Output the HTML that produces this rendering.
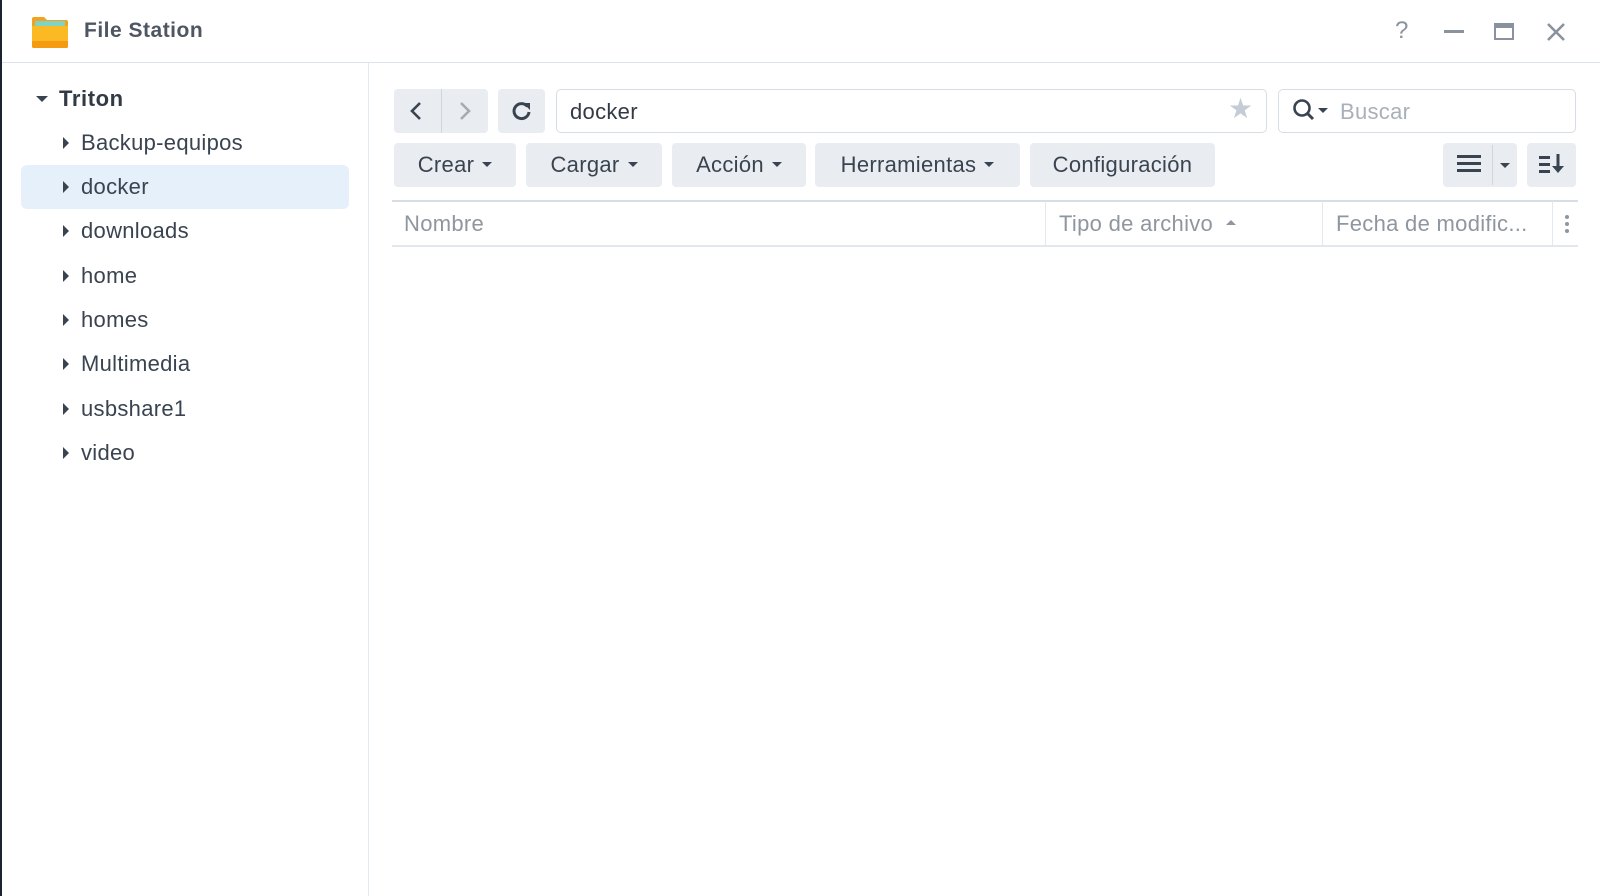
<!DOCTYPE html>
<html><head><meta charset="utf-8"><style>
*{box-sizing:border-box;margin:0;padding:0}
body{width:1600px;height:896px;background:#fff;font-family:"Liberation Sans",sans-serif;position:relative;overflow:hidden;color:#3a4450}
.win{position:absolute;left:2px;top:0;width:1598px;height:896px;background:#fff;border-radius:6px 0 0 0}
.a{position:absolute}
.t{position:absolute;font-size:22px;line-height:24px;white-space:nowrap;letter-spacing:0.3px}
.btn{position:absolute;background:#e9edf2;border-radius:4px;font-size:22px;letter-spacing:0.3px;color:#3a4450;text-align:center;line-height:44px;height:44px}
.car{display:inline-block;width:0;height:0;border-left:5px solid transparent;border-right:5px solid transparent;border-top:5px solid #3a4450;vertical-align:middle;margin-left:8px;margin-top:-3px}
.tri{position:absolute;width:0;height:0;border-top:6px solid transparent;border-bottom:6px solid transparent;border-left:6px solid #3a4450}
</style></head><body>
<div class="a" style="left:0;top:0;width:2px;height:896px;background:#1e2130"></div>
<div class="win">
 <svg class="a" style="left:28px;top:15px" width="40" height="34" viewBox="0 0 40 34">
  <path d="M2 4 Q2 2 4 2 H14 L17 5 H36 Q38 5 38 7 V31 Q38 33 36 33 H4 Q2 33 2 31Z" fill="#f2a21c"/>
  <rect x="5" y="6" width="30" height="6" fill="#7fd3c4"/>
  <path d="M2 11 H38 V31 Q38 33 36 33 H4 Q2 33 2 31Z" fill="#fbb924"/>
  <path d="M2 26 H38 V31 Q38 33 36 33 H4 Q2 33 2 31Z" fill="#f59b12"/>
 </svg>
 <div class="t" style="left:82px;top:19px;font-weight:bold;color:#4e5661;font-size:21px;letter-spacing:0.5px">File Station</div>
 <div class="t" style="left:1393px;top:19px;font-size:24px;color:#8a939d">?</div>
 <div class="a" style="left:1442px;top:30px;width:20px;height:3px;background:#8a939d"></div>
 <div class="a" style="left:1492px;top:23px;width:20px;height:17px;border:2.5px solid #8a939d;border-top-width:5px"></div>
 <svg class="a" style="left:1544px;top:22px" width="20" height="20"><path d="M2 2L18 18M18 2L2 18" stroke="#8a939d" stroke-width="2.6"/></svg>
 <div class="a" style="left:0;top:62px;width:1598px;height:1px;background:#dde3ea"></div>
 <div class="a" style="left:366px;top:63px;width:1px;height:833px;background:#e3e8ee"></div>
 <div class="a" style="left:34px;top:96px;width:0;height:0;border-left:6px solid transparent;border-right:6px solid transparent;border-top:6px solid #3a4450"></div>
 <div class="t" style="left:57px;top:87px;font-weight:bold;font-size:22px;color:#323b45;letter-spacing:0.6px">Triton</div>
 <div class="a" style="left:19px;top:165px;width:328px;height:44px;background:#e6f0fb;border-radius:6px"></div>
 <div class="tri" style="left:61px;top:137px"></div><div class="t" style="left:79px;top:131px">Backup-equipos</div>
 <div class="tri" style="left:61px;top:181px"></div><div class="t" style="left:79px;top:175px">docker</div>
 <div class="tri" style="left:61px;top:225px"></div><div class="t" style="left:79px;top:219px">downloads</div>
 <div class="tri" style="left:61px;top:270px"></div><div class="t" style="left:79px;top:264px">home</div>
 <div class="tri" style="left:61px;top:314px"></div><div class="t" style="left:79px;top:308px">homes</div>
 <div class="tri" style="left:61px;top:358px"></div><div class="t" style="left:79px;top:352px">Multimedia</div>
 <div class="tri" style="left:61px;top:403px"></div><div class="t" style="left:79px;top:397px">usbshare1</div>
 <div class="tri" style="left:61px;top:447px"></div><div class="t" style="left:79px;top:441px">video</div>
 <div class="btn" style="left:392px;top:89px;width:94px"></div>
 <div class="a" style="left:439px;top:89px;width:1px;height:44px;background:#cfd6de"></div>
 <svg class="a" style="left:405px;top:100px" width="20" height="22"><path d="M13 3L5 11L13 19" fill="none" stroke="#3a4450" stroke-width="2.6"/></svg>
 <svg class="a" style="left:452px;top:100px" width="20" height="22"><path d="M7 3L15 11L7 19" fill="none" stroke="#a3abb4" stroke-width="2.6"/></svg>
 <div class="btn" style="left:496px;top:89px;width:47px"></div>
 <svg class="a" style="left:508px;top:100px" width="24" height="22"><path d="M17.5 6.5A7.5 7.5 0 1 0 19 12" fill="none" stroke="#3a4450" stroke-width="3"/><path d="M13 3H20V10Z" fill="#3a4450"/></svg>
 <div class="a" style="left:554px;top:89px;width:711px;height:44px;border:1.5px solid #d6dde5;border-radius:5px"></div>
 <div class="t" style="left:568px;top:100px;color:#323b45">docker</div>
 <div class="t" style="left:1226px;top:97px;font-size:28px;color:#c5ccd5">★</div>
 <div class="a" style="left:1276px;top:89px;width:298px;height:44px;border:1.5px solid #d6dde5;border-radius:5px"></div>
 <svg class="a" style="left:1290px;top:98px" width="26" height="26"><circle cx="10" cy="10" r="7.5" fill="none" stroke="#3a4450" stroke-width="2.6"/><path d="M15.5 15.5L21 21" stroke="#3a4450" stroke-width="3"/></svg>
 <div class="a" style="left:1316px;top:108px;border-left:5px solid transparent;border-right:5px solid transparent;border-top:5px solid #3a4450"></div>
 <div class="t" style="left:1338px;top:100px;color:#a8b0b9">Buscar</div>
 <div class="btn" style="left:392px;top:143px;width:122px">Crear<span class="car"></span></div>
 <div class="btn" style="left:524px;top:143px;width:136px">Cargar<span class="car"></span></div>
 <div class="btn" style="left:670px;top:143px;width:134px">Acción<span class="car"></span></div>
 <div class="btn" style="left:813px;top:143px;width:205px">Herramientas<span class="car"></span></div>
 <div class="btn" style="left:1028px;top:143px;width:185px">Configuración</div>
 <div class="btn" style="left:1441px;top:143px;width:74px"></div>
 <div class="a" style="left:1490px;top:145px;width:1px;height:40px;background:#cfd6de"></div>
 <div class="a" style="left:1455px;top:155px;width:24px;height:3px;background:#3a4450;box-shadow:0 7px 0 #3a4450,0 14px 0 #3a4450"></div>
 <div class="a" style="left:1498px;top:163px;border-left:5px solid transparent;border-right:5px solid transparent;border-top:5px solid #3a4450"></div>
 <div class="btn" style="left:1525px;top:143px;width:49px"></div>
 <div class="a" style="left:1537px;top:156px;width:11px;height:3px;background:#3a4450;box-shadow:0 7px 0 #3a4450,0 14px 0 #3a4450"></div>
 <svg class="a" style="left:1549px;top:153px" width="14" height="22"><path d="M7 1V16" stroke="#3a4450" stroke-width="3"/><path d="M1 13L7 20L13 13Z" fill="#3a4450"/></svg>
 <div class="a" style="left:390px;top:200px;width:1186px;height:1.5px;background:#d6dde5"></div>
 <div class="a" style="left:390px;top:245px;width:1186px;height:1.5px;background:#e3e8ee"></div>
 <div class="a" style="left:1043px;top:201px;width:1px;height:44px;background:#e3e8ee"></div>
 <div class="a" style="left:1320px;top:201px;width:1px;height:44px;background:#e3e8ee"></div>
 <div class="a" style="left:1550px;top:201px;width:1px;height:44px;background:#e3e8ee"></div>
 <div class="t" style="left:402px;top:212px;color:#8e969f">Nombre</div>
 <div class="t" style="left:1057px;top:212px;color:#8e969f">Tipo de archivo</div>
 <div class="a" style="left:1224px;top:220px;border-left:5px solid transparent;border-right:5px solid transparent;border-bottom:5px solid #8e969f"></div>
 <div class="t" style="left:1334px;top:212px;color:#8e969f">Fecha de modific...</div>
 <div class="a" style="left:1563px;top:215px;width:4px;height:4px;border-radius:2px;background:#8e969f;box-shadow:0 7px 0 #8e969f,0 14px 0 #8e969f"></div>
</div>
</body></html>
